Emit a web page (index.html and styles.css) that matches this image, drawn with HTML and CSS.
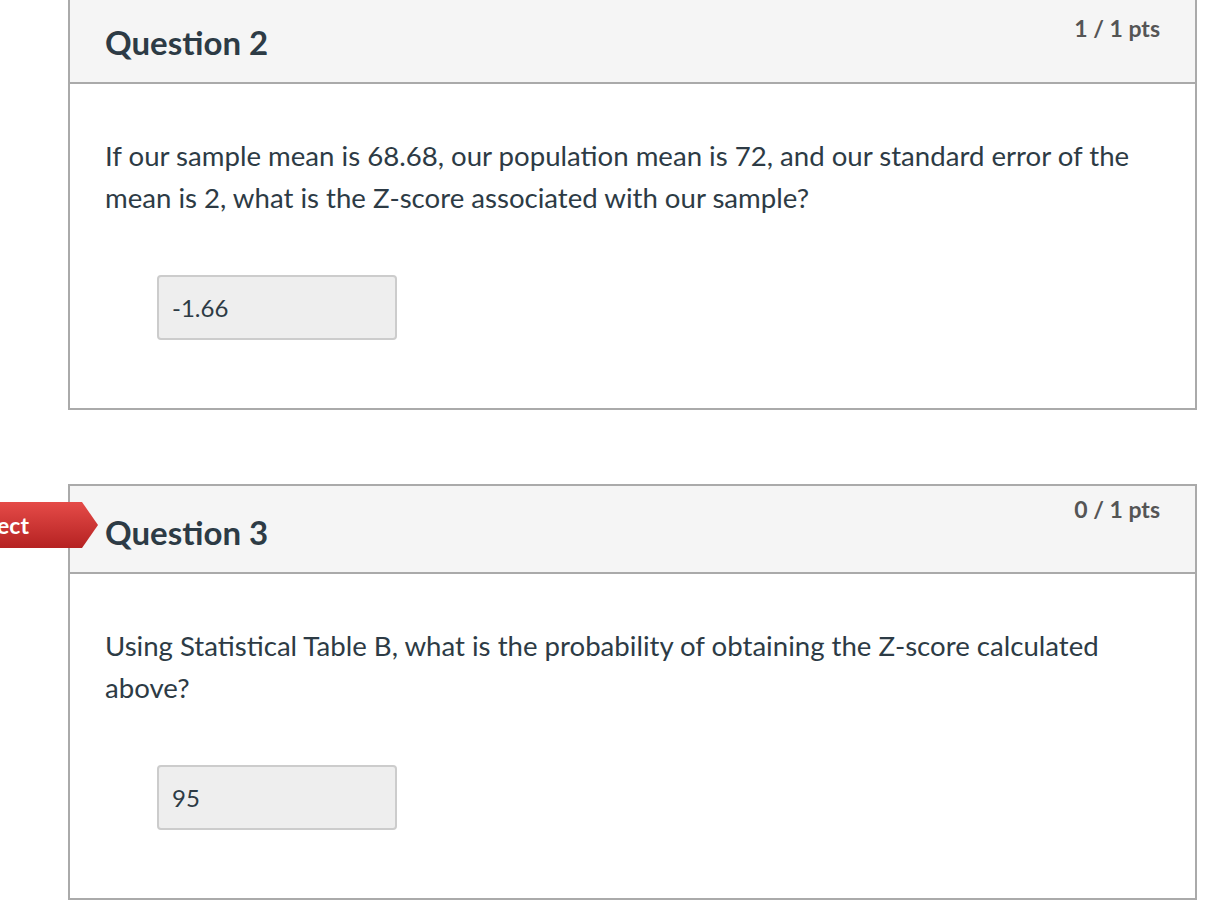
FILE: index.html
```html
<!DOCTYPE html>
<html lang="en">
<head>
<meta charset="utf-8">
<title>Quiz</title>
<link rel="stylesheet" href="styles.css">
</head>
<body>
<div class="page">
  <div class="question question--first">
    <div class="q-header">
      <h2 class="q-title">Question 2</h2>
      <div class="q-points q-points--first">1 / 1 pts</div>
    </div>
    <div class="q-body">
      <p class="q-text">If our sample mean is 68.68, our population mean is 72, and our standard error of the mean is 2, what is the Z-score associated with our sample?</p>
      <div class="answer">-1.66</div>
    </div>
  </div>

  <div class="question">
    <div class="result-tag"><span>Incorrect</span></div>
    <div class="q-header">
      <h2 class="q-title">Question 3</h2>
      <div class="q-points">0 / 1 pts</div>
    </div>
    <div class="q-body">
      <p class="q-text">Using Statistical Table B, what is the probability of obtaining the Z-score calculated above?</p>
      <div class="answer">95</div>
    </div>
  </div>
</div>
</body>
</html>
```
FILE: styles.css
```css
html, body {
  margin: 0;
  padding: 0;
  background: #ffffff;
}
body {
  font-family: Lato, "Noto Sans", sans-serif;
  color: #2d3b45;
  overflow: hidden;
}
.page {
  padding-left: 68px;
  width: 1129px;
  margin-top: -6px;
}
.question {
  position: relative;
  border: 2px solid #aaaaaa;
  margin-bottom: 74px;
}
.question:last-child {
  margin-bottom: 0;
}
.q-header {
  height: 88px;
  box-sizing: border-box;
  background: #f5f5f5;
  border-bottom: 2px solid #aaaaaa;
  display: flex;
  justify-content: space-between;
  align-items: flex-start;
  padding: 0 35px;
}
.q-title {
  margin: 0;
  padding-top: 24px;
  font-size: 33px;
  line-height: 44px;
  font-weight: 700;
  color: #2d3b45;
}
.q-points {
  margin-top: 10px;
  font-size: 23px;
  line-height: 26px;
  font-weight: 700;
  color: #555555;
}
.q-points--first {
  margin-top: 19px;
}
.q-body {
  padding: 51px 35px 68px;
}
.q-text {
  margin: 0;
  font-size: 27.6px;
  line-height: 42px;
}
.answer {
  margin: 56px 0 0 52px;
  width: 240px;
  height: 65px;
  box-sizing: border-box;
  background: #eeeeee;
  border: 2px solid #cccccc;
  border-radius: 4px;
  padding-left: 13px;
  display: flex;
  align-items: center;
  font-size: 24px;
  color: #2d3b45;
}
.result-tag {
  position: absolute;
  top: 16px;
  left: -188px;
  width: 216px;
  height: 46px;
  box-sizing: border-box;
  padding-right: 69px;
  display: flex;
  align-items: center;
  justify-content: flex-end;
  background: linear-gradient(#e54b48, #b52222);
  clip-path: polygon(0 0, 200px 0, 216px 50%, 200px 100%, 0 100%);
  color: #ffffff;
  font-size: 23px;
  font-weight: 700;
}
```
